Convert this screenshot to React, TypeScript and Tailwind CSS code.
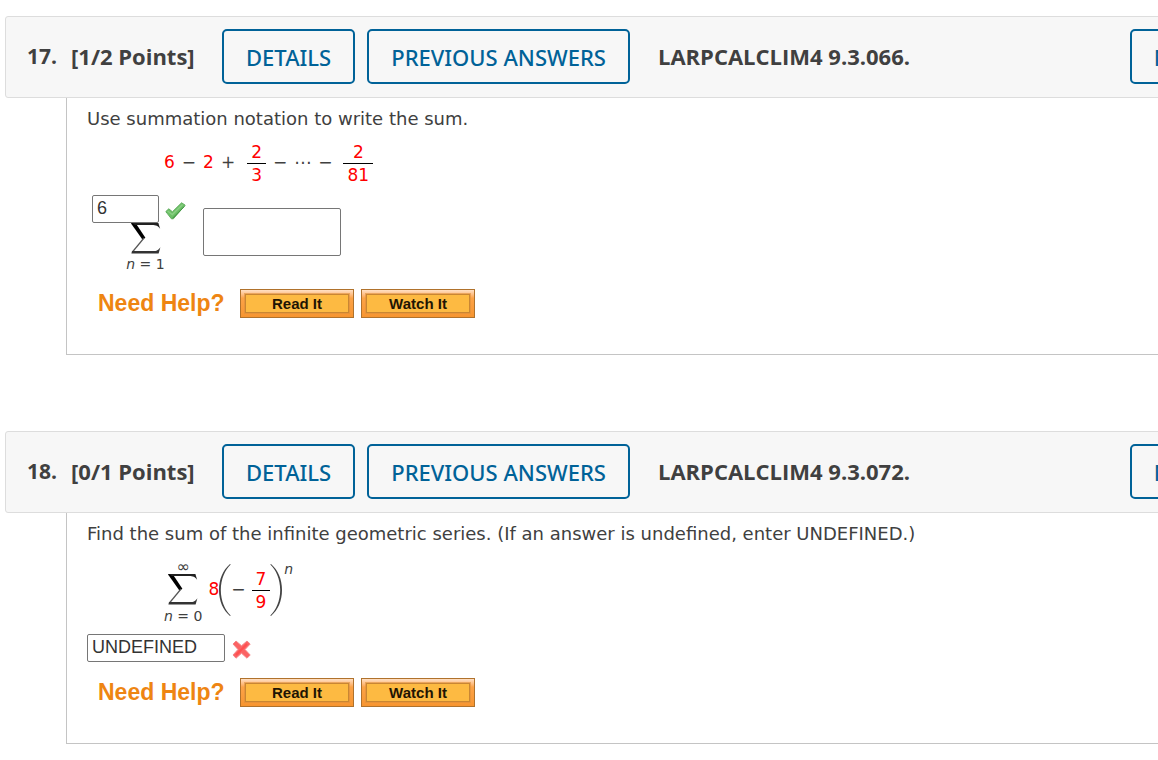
import type { ReactNode } from "react"

const headerButton =
  "h-[55px] shrink-0 rounded-[5px] border-2 border-[#006298] px-[22px] font-['Noto_Sans','Open_Sans',sans-serif] text-[22px] leading-7 font-medium whitespace-nowrap text-[#006298]"

const answerBox =
  "rounded-[2px] border border-[#767676] bg-white px-1 pb-[2px] font-['Liberation_Sans',Arial,sans-serif] text-lg text-[#333333] outline-none"

function Sigma() {
  return (
    <svg className="h-8 w-[30px]" viewBox="0 0 30 32" aria-hidden="true">
      <path d="M0 0H4.6L14.4 14.8L11.6 16.8L0.4 1Z" fill="#000000" />
      <path d="M1 0H27.4L29.2 6C27 2.8 25 2.1 21 2.1H4Z" fill="#222222" />
      <path d="M13 15L1.4 29" fill="none" stroke="#555555" strokeWidth="1.2" />
      <path d="M1 28H22C25.6 28 27.4 27.2 29.4 24.2L27.6 30.6H0.4Z" fill="#333333" />
    </svg>
  )
}

function Paren({ flip = false }: { flip?: boolean }) {
  return (
    <svg className="h-[52px] w-3 shrink-0" viewBox="0 0 12 52" fill="#444444" aria-hidden="true">
      {flip ? (
        <path d="M0.3 0.5C6 6 10.2 15 10.2 26S6 46 0.3 51.5L1 52C8 46 12 37 12 26S8 6 1 0Z" />
      ) : (
        <path d="M11.7 0.5C6 6 1.8 15 1.8 26S6 46 11.7 51.5L11 52C4 46 0 37 0 26S4 6 11 0Z" />
      )}
    </svg>
  )
}

function CheckMark() {
  return (
    <svg className="mt-1 h-[18px] w-[21px] shrink-0" viewBox="0 0 21 18" role="img" aria-label="Correct">
      <path
        d="M0.8 9.6L3.8 6.8L7.4 9.8L16.6 0.8L20.2 3.2L8.4 16.8H6.4Z"
        fill="#6cc067"
        stroke="#63ad60"
        strokeWidth="1"
        strokeLinejoin="round"
      />
      <path d="M2.6 9L7.3 12.6L17.6 2.6" fill="none" stroke="#8ad083" strokeWidth="1.4" />
      <path d="M7.4 16.4L19.4 4.4" fill="none" stroke="#3f9440" strokeWidth="1" />
    </svg>
  )
}

function CrossMark() {
  return (
    <svg className="mt-[2px] h-[19px] w-[19px] shrink-0" viewBox="0 0 19 19" role="img" aria-label="Incorrect">
      <path
        d="M1 4L4 1L9.5 5.8L15 1L18.2 4L13 9.5L18.2 15L15 18.2L9.5 13.2L4 18.2L1 15L6 9.5Z"
        fill="#fb6364"
        stroke="#f58588"
        strokeWidth="1"
        strokeLinejoin="round"
      />
      <path d="M4 15L15 4" stroke="#ff4f50" strokeWidth="2" />
    </svg>
  )
}

function Fraction({ top, bottom }: { top: string; bottom: string }) {
  return (
    <span className="inline-flex flex-col text-center leading-[22px] text-[#ff0000]">
      <span className="border-b border-black px-1">{top}</span>
      <span className="px-1">{bottom}</span>
    </span>
  )
}

function NeedHelp() {
  return (
    <div className="mt-4 flex h-[29px] items-start pl-[11px]">
      <span className="w-[142px] font-['Liberation_Sans',Arial,sans-serif] text-[23px] leading-7 font-bold whitespace-nowrap text-[#ee8512]">
        Need Help?
      </span>
      <div className="flex gap-[7px]">
        {["Read It", "Watch It"].map((label) => (
          <button
            key={label}
            type="button"
            className="h-[29px] w-[114px] border border-[#b0722c] bg-linear-to-b from-[#ffe0c4] via-[#fca347] via-30% to-[#f79530] p-1 font-['Liberation_Sans',Arial,sans-serif] text-[15px] font-bold text-[#1f1504]"
          >
            <span className="flex h-full items-center justify-center border border-[#c98633] bg-[#fdba42] leading-4 ring-1 ring-[#dd8f3a]/60">
              {label}
            </span>
          </button>
        ))}
      </div>
    </div>
  )
}

type QuestionProps = {
  number: number
  points: string
  code: string
  prompt: string
  children: ReactNode
}

function Question({ number, points, code, prompt, children }: QuestionProps) {
  return (
    <section className="-mr-[140px]">
      <header className="flex h-[82px] items-start rounded-[3px] border border-[#dddddd] bg-[#f7f7f7] pt-3 pr-[10px] pl-[21px] font-['Open_Sans',sans-serif] text-[22px] leading-[55px] text-[#404040]">
        <h2 className="flex w-[195px] shrink-0 gap-3 font-bold whitespace-nowrap">
          <span className="w-8 text-[21px]">{number}.</span>
          <span>[{points} Points]</span>
        </h2>
        <div className="flex gap-3">
          <button type="button" className={headerButton}>
            DETAILS
          </button>
          <button type="button" className={headerButton}>
            PREVIOUS ANSWERS
          </button>
        </div>
        <span className="ml-7 font-bold whitespace-nowrap">{code}</span>
        <button type="button" className={`${headerButton} ml-auto`}>
          MY NOTES
        </button>
      </header>
      <div className="ml-[61px] border-b border-l border-[#c4c4c4] pt-[9px] pb-9 pl-5">
        <p className="text-lg leading-6">{prompt}</p>
        {children}
        <NeedHelp />
      </div>
    </section>
  )
}

export default function App() {
  return (
    <main className="flex min-h-screen flex-col gap-[76px] overflow-hidden bg-white pt-4 pb-4 pl-[5px] font-['DejaVu_Sans',Verdana,sans-serif] text-[17px] text-[#404040]">
      <Question
        number={17}
        points="1/2"
        code="LARPCALCLIM4 9.3.066."
        prompt="Use summation notation to write the sum."
      >
        <div className="mt-[9px] flex items-center gap-[7px] pl-[77px]">
          <span className="text-[#ff0000]">6</span>
          <span>−</span>
          <span className="text-[#ff0000]">2</span>
          <span>+</span>
          <span className="pl-[5px]">
            <Fraction top="2" bottom="3" />
          </span>
          <span>−</span>
          <span>⋯</span>
          <span>−</span>
          <span className="pl-1">
            <Fraction top="2" bottom="81" />
          </span>
        </div>
        <div className="mt-[9px] flex items-start gap-1 pl-[5px]">
          <div className="flex w-[107px] flex-col items-center">
            <div className="flex items-center gap-[6px] self-start">
              <input type="text" aria-label="Upper limit" defaultValue="6" className={`${answerBox} h-7 w-[67px]`} />
              <CheckMark />
            </div>
            <Sigma />
            <span className="text-sm leading-[18px]">
              <i>n</i> = 1
            </span>
          </div>
          <input type="text" aria-label="Summand" className={`${answerBox} mt-[13px] h-12 w-[138px]`} />
        </div>
      </Question>

      <Question
        number={18}
        points="0/1"
        code="LARPCALCLIM4 9.3.072."
        prompt="Find the sum of the infinite geometric series. (If an answer is undefined, enter UNDEFINED.)"
      >
        <div className="mt-[14px] flex items-start gap-[6px] pl-[77px]">
          <div className="flex flex-col items-center text-sm">
            <span className="text-base leading-[14px]">∞</span>
            <Sigma />
            <span className="leading-5">
              <i>n</i> = 0
            </span>
          </div>
          <div className="mt-1 flex items-center">
            <span className="text-[#ff0000]">8</span>
            <Paren />
            <span className="mr-[6px]">−</span>
            <Fraction top="7" bottom="9" />
            <Paren flip />
            <i className="ml-[2px] self-start text-sm leading-[10px]">n</i>
          </div>
        </div>
        <div className="mt-2 flex items-center gap-[7px]">
          <input type="text" aria-label="Answer" defaultValue="UNDEFINED" className={`${answerBox} h-7 w-[138px]`} />
          <CrossMark />
        </div>
      </Question>
    </main>
  )
}
